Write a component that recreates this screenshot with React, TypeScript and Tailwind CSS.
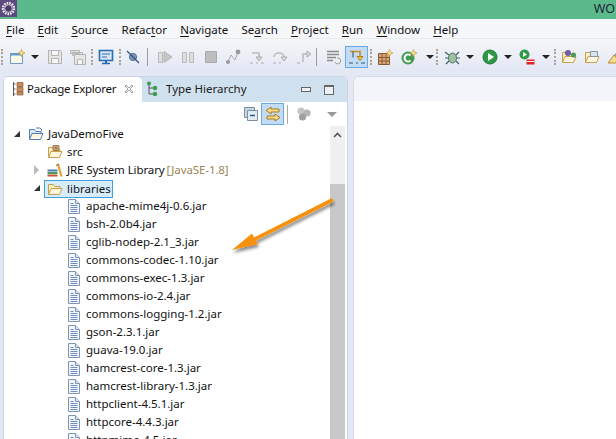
import type { ReactNode } from "react";

const jars = [
  "apache-mime4j-0.6.jar",
  "bsh-2.0b4.jar",
  "cglib-nodep-2.1_3.jar",
  "commons-codec-1.10.jar",
  "commons-exec-1.3.jar",
  "commons-io-2.4.jar",
  "commons-logging-1.2.jar",
  "gson-2.3.1.jar",
  "guava-19.0.jar",
  "hamcrest-core-1.3.jar",
  "hamcrest-library-1.3.jar",
  "httpclient-4.5.1.jar",
  "httpcore-4.4.3.jar",
  "httpmime-4.5.jar",
];

function U({ children }: { children: ReactNode }) {
  return <span className="underline underline-offset-2">{children}</span>;
}

function Ic({ w = 16, className = "", children }: { w?: number; className?: string; children: ReactNode }) {
  return (
    <svg width={w} height="16" viewBox={`0 0 ${w} 16`} className={`shrink-0 ${className}`}>
      {children}
    </svg>
  );
}

function Grip({ className = "" }: { className?: string }) {
  return <div className={`h-[16px] w-[2px] shrink-0 border-l-2 border-dotted border-[#a9a392] ${className}`} />;
}

function Drop({ className = "" }: { className?: string }) {
  return <div className={`h-0 w-0 shrink-0 border-x-[4px] border-t-[4px] border-x-transparent border-t-[#222] ${className}`} />;
}

function Sep({ className = "" }: { className?: string }) {
  return <div className={`h-[18px] w-px shrink-0 bg-[#9a9aa0] ${className}`} />;
}

function Star() {
  return <path d="M12.500 .5l1 2.500 2.500 1-2.500 1-1 2.500-1-2.500-2.500-1 2.500-1z" fill="#f7e3a0" stroke="#c79b35" strokeWidth=".7" />;
}

function Folder({ color = "#c9a14e", fill = "#fbeec4" }: { color?: string; fill?: string }) {
  return (
    <>
      <path d="M1.500 13.500v-10h5l1.500 2h5v2" fill={fill} stroke={color} />
      <path d="M1.500 13.500l2.500-6h11l-2.500 6z" fill="#fff6dc" stroke={color} />
    </>
  );
}

function JarIcon() {
  return (
    <Ic className="mr-[3px]">
      <path d="M1.500 1.500h7l4 4v10h-11z" fill="#f3f6fb" stroke="#8094b4" />
      <path d="M8.500 1.500v4h4" fill="#dfe6f2" stroke="#8094b4" />
      <path d="M3.500 5.500h3M3.500 7.500h7M3.500 9.500h7M3.500 11.500h7M3.500 13.500h7" stroke="#6f8fc0" />
    </Ic>
  );
}

function Row({ children, indent }: { children: ReactNode; indent: string }) {
  return <div className={`flex h-[18px] items-center whitespace-nowrap pb-[2px] ${indent}`}>{children}</div>;
}

function Expanded() {
  return <div className="h-0 w-0 shrink-0 border-b-[6px] border-l-[6px] border-b-[#333] border-l-transparent" />;
}

export default function App() {
  return (
    <div
      className="relative flex h-[439px] w-[616px] flex-col overflow-hidden bg-[#e4e8f5] text-[11.5px] text-[#111]"
      style={{ fontFamily: '"Noto Sans", "Open Sans", sans-serif' }}
    >
      {/* title bar */}
      <div className="flex h-[19px] shrink-0 items-center justify-between bg-[#5aba8b]">
        <div className="flex h-[17px] w-[17px] items-center justify-center self-start bg-[#5d4a7f]">
          <svg width="15" height="15" viewBox="0 0 15 15">
            <circle cx="7.500" cy="7.500" r="5.500" fill="none" stroke="#eee" strokeWidth="2.400" strokeDasharray="1.600 1" />
            <circle cx="7.500" cy="7.500" r="3.800" fill="#4b3a6b" stroke="#e4e4e4" strokeWidth=".8" />
          </svg>
        </div>
        <span className="whitespace-nowrap pr-[1px] text-[12.5px] text-[#223]">WO</span>
      </div>

      {/* menu */}
      <div className="flex h-[19px] shrink-0 items-center gap-[13.2px] bg-[#f6f7f9] pl-[6px] pt-[2px]">
        <span><U>F</U>ile</span>
        <span><U>E</U>dit</span>
        <span><U>S</U>ource</span>
        <span>Refac<U>t</U>or</span>
        <span><U>N</U>avigate</span>
        <span>Se<U>a</U>rch</span>
        <span><U>P</U>roject</span>
        <span><U>R</U>un</span>
        <span><U>W</U>indow</span>
        <span><U>H</U>elp</span>
      </div>

      {/* toolbar */}
      <div className="flex h-[32px] shrink-0 items-center overflow-hidden border-t border-[#e9eaee] bg-gradient-to-b from-[#f5f6f8] to-[#e4e8f5] pt-[4px]">
        <Grip className="ml-[1px]" />
        <Ic className="ml-[6px]">
          <path d="M1.500 4.500h12v10h-12z" fill="#fdf8e6" stroke="#6e9ac6" />
          <path d="M1.500 4.500h12v2h-12z" fill="#5f9bd4" />
          <Star />
        </Ic>
        <Drop className="ml-[6px]" />
        <Ic className="ml-[8px]">
          <path d="M1.500 1.500h12l1 1v12h-13z" fill="#e6e6e6" stroke="#b3b3b3" />
          <path d="M4.500 1.500h7v5h-7zM4.500 9.500h7v5h-7z" fill="#f6f6f6" stroke="#b3b3b3" />
        </Ic>
        <Ic className="ml-[7px]">
          <path d="M.5 1.500h9v3h-9zM2.500 3.500h10v3h-10z" fill="#e0e0e0" stroke="#b7b7b7" />
          <path d="M4.500 5.500h11v10h-11z" fill="#e6e6e6" stroke="#b3b3b3" />
          <path d="M7.500 10.500h5v5h-5z" fill="#f6f6f6" stroke="#b3b3b3" />
        </Ic>
        <Grip className="ml-[5px]" />
        <Ic className="ml-[5px]">
          <path d="M1.500 1.500h13v10h-13z" fill="#d7e6f5" stroke="#2a6cb0" strokeWidth="1.600" />
          <path d="M4 5h8M4 8h5" stroke="#2a6cb0" />
          <path d="M4 14.500h8" stroke="#2a6cb0" strokeWidth="1.500" />
          <path d="M8 12v2" stroke="#2a6cb0" strokeWidth="2" />
        </Ic>
        <Grip className="ml-[5px]" />
        <Ic className="ml-[4px]">
          <circle cx="8" cy="8" r="3.600" fill="#7e97bb" stroke="#56709b" />
          <path d="M2 2l12 12" stroke="#2f4f83" strokeWidth="1.200" />
        </Ic>
        <Sep className="ml-[6px]" />
        <Ic className="ml-[9px]">
          <path d="M1.500 3.500h4v10h-4z" fill="#ddd" stroke="#bbb" />
          <path d="M7 2.500l8 5.500-8 5.500z" fill="#c6c6c6" stroke="#b3b3b3" />
        </Ic>
        <Ic className="ml-[7px]">
          <path d="M2.500 3.500h4v10h-4zM9.500 3.500h4v10h-4z" fill="#ddd" stroke="#bbb" />
        </Ic>
        <Ic className="ml-[7px]">
          <path d="M2.500 2.500h11v11h-11z" fill="#bdbdbd" stroke="#aaa" />
        </Ic>
        <Ic className="ml-[6px]">
          <path d="M3 13l3-7 4 5 3-8" fill="none" stroke="#a8a8a8" />
          <circle cx="3" cy="13" r="2" fill="#999" />
          <circle cx="13" cy="3" r="2.400" fill="#999" />
        </Ic>
        <Ic className="ml-[8px]">
          <path d="M3 4h7v6" fill="none" stroke="#bbb" strokeWidth="1.600" />
          <path d="M7 8l3 4 3-4z" fill="#ddd" stroke="#aaa" />
          <path d="M1 14h3M7 14h2M12 14h3" stroke="#aaa" />
        </Ic>
        <Ic className="ml-[7px]">
          <path d="M2 8a5 4 0 0 1 10 0" fill="none" stroke="#bbb" strokeWidth="1.600" />
          <path d="M9 8l3 4 3-4z" fill="#ddd" stroke="#aaa" />
          <path d="M1 14h3M7 14h2" stroke="#aaa" />
        </Ic>
        <Ic className="ml-[8px]">
          <path d="M7 13V5h4" fill="none" stroke="#bbb" strokeWidth="1.600" />
          <path d="M11 2l4 3-4 3z" fill="#ddd" stroke="#aaa" />
          <path d="M1 14h3" stroke="#aaa" />
        </Ic>
        <Sep className="ml-[4px]" />
        <Ic className="ml-[9px]">
          <path d="M1 2.500h12M1 5.500h12M1 8.500h9M1 11.500h6" stroke="#8b8b8b" strokeWidth="1.400" />
          <path d="M9 13a3 3 0 1 0 2-4" fill="#eee" stroke="#999" />
        </Ic>
        <div className="ml-[3px] flex h-[22px] w-[23px] shrink-0 items-center justify-center border border-[#6aa9e6] bg-[#c3dcf5]">
          <Ic>
            <path d="M1 2.500h10v5" fill="none" stroke="#c98f1e" strokeWidth="1.700" />
            <path d="M8 7.500h6l-3 4z" fill="#f3c44f" stroke="#b57f15" />
            <path d="M4 2.500v6M0 14h4M7 14h2M12 14h4" stroke="#456" strokeWidth="1.100" />
          </Ic>
        </div>
        <Grip className="ml-[2px]" />
        <Ic className="ml-[5px]">
          <path d="M1.500 4.500h11v11h-11z" fill="#d9a77c" stroke="#8a5a33" />
          <path d="M5 4.500v11M9 4.500v11M1.500 8.500h11M1.500 12h11" stroke="#8a5a33" />
          <Star />
        </Ic>
        <Ic className="ml-[8px]">
          <circle cx="7" cy="9" r="6.500" fill="#3f9c4e" />
          <path d="M9.500 6.500a3.500 3.500 0 1 0 0 5" fill="none" stroke="#fff" strokeWidth="2" />
          <Star />
        </Ic>
        <Drop className="ml-[9px]" />
        <Grip className="ml-[2px]" />
        <Ic className="ml-[6px]">
          <ellipse cx="8.500" cy="9" rx="4" ry="5" fill="#9fc0a0" stroke="#4a7a5b" />
          <path d="M1 3l4 3M1 9h3M2 15l3-3M15 3l-3 3M16 9h-3M15 15l-3-3" stroke="#3a5a70" strokeWidth="1.100" />
        </Ic>
        <Drop className="ml-[6px]" />
        <Ic className="ml-[8px]">
          <circle cx="8" cy="8" r="7" fill="#2f9a45" stroke="#1d7a33" />
          <path d="M6 4l6 4-6 4z" fill="#fff" />
        </Ic>
        <Drop className="ml-[6px]" />
        <Ic className="ml-[7px]">
          <circle cx="5.500" cy="5.500" r="5" fill="#2f9a45" />
          <path d="M4 3l4 2.500-4 2.500z" fill="#fff" />
          <path d="M7.500 10.500h8v5h-8z" fill="#e0242a" />
          <path d="M7.500 12.500h8" stroke="#fff" />
        </Ic>
        <Drop className="ml-[7px]" />
        <Grip className="ml-[4px]" />
        <Ic className="ml-[5px]">
          <Folder />
          <circle cx="7" cy="4" r="3" fill="#6b5ba8" />
          <circle cx="12.500" cy="6" r="2.600" fill="#4f9a58" />
        </Ic>
        <Ic className="ml-[7px]">
          <Folder />
          <path d="M6.500 2.500h7v5h-7z" fill="#dbe3ee" stroke="#8494ad" />
        </Ic>
        <Ic className="ml-[7px]">
          <path d="M1 14l6-8 7 8z" fill="#f5d98c" stroke="#b98d33" />
          <path d="M7 6l4-4 4 4-3 3z" fill="#999" />
        </Ic>
      </div>

      {/* workbench */}
      <div className="flex min-h-0 flex-1 gap-[5px] pl-[3px] pt-[6px]">
        {/* Package Explorer view */}
        <div className="flex h-[400px] w-[345px] shrink-0 flex-col overflow-hidden rounded-t-[5px] border border-b-0 border-[#cdd3e0] bg-white">
          <div className="flex h-[25px] shrink-0 items-stretch bg-[#cfe0ee]">
            <div className="flex w-[138px] shrink-0 items-center rounded-tr-[5px] bg-white pb-[2px] pl-[7px]">
              <Ic w={14} className="mr-[2px]">
                <path d="M2.500 1v14" stroke="#555" />
                <path d="M2.500 3h2M2.500 8h2M2.500 13h2" stroke="#555" />
                <path d="M6 1.500h6v4h-6zM6 6.500h6v4h-6zM6 11h6v3h-6z" fill="#c98c5a" stroke="#8a5a33" strokeWidth=".7" />
              </Ic>
              <span className="whitespace-nowrap tracking-[-.25px]">Package Explorer</span>
              <svg width="10" height="10" viewBox="0 0 10 10" className="ml-[8px] shrink-0">
                <path d="M1 2l1-1 3 3 3-3 1 1-3 3 3 3-1 1-3-3-3 3-1-1 3-3z" fill="#fff" stroke="#888" strokeWidth=".8" />
              </svg>
            </div>
            <div className="flex items-center pb-[2px] pl-[4px]">
              <Ic w={12} className="mr-[8px]">
                <path d="M3 2v11h5M3 7h5" fill="none" stroke="#555" />
                <circle cx="3" cy="2.500" r="2" fill="#3f9c4e" />
                <circle cx="9" cy="7" r="2.200" fill="#3f9c4e" />
                <circle cx="9" cy="13" r="2.200" fill="#3f9c4e" />
              </Ic>
              <span className="whitespace-nowrap text-[#222]">Type Hierarchy</span>
            </div>
            <div className="ml-auto flex items-center gap-[13px] pr-[13px]">
              <div className="h-[5px] w-[10px] border border-[#666] bg-[#eef2f7]" />
              <div className="h-[10px] w-[10px] border border-t-2 border-[#666] bg-[#eef2f7]" />
            </div>
          </div>

          <div className="flex h-[24px] shrink-0 items-center justify-end pr-[10px]">
            <Ic>
              <path d="M1.500 1.500h10v10h-10z" fill="#c8d6e4" stroke="#7b8ea3" />
              <path d="M4.500 4.500h10v10h-10z" fill="#e3ecf4" stroke="#7b8ea3" />
              <path d="M7 9.500h5" stroke="#33597f" strokeWidth="1.400" />
            </Ic>
            <div className="ml-[2px] flex h-[22px] w-[23px] items-center justify-center border border-[#6aa9e6] bg-[#c3dcf5]">
              <Ic>
                <path d="M6 1L1 4.500 6 8V6h8V3H6z" fill="#f8dc8c" stroke="#a97a18" />
                <path d="M10 8l5 3.500-5 3.500v-2H2v-3h8z" fill="#f8dc8c" stroke="#a97a18" />
              </Ic>
            </div>
            <div className="ml-[3px] mr-[8px] h-[19px] w-px bg-[#aaa]" />
            <Ic>
              <circle cx="5" cy="5" r="3.600" fill="#c5c5c5" />
              <circle cx="11" cy="7" r="3.600" fill="#b5b5b5" />
              <circle cx="6.500" cy="11" r="3.600" fill="#a0a0a0" />
            </Ic>
            <div className="ml-[15px] h-0 w-0 border-x-[5px] border-t-[5px] border-x-transparent border-t-[#999]" />
          </div>

          <div className="flex min-h-0 flex-1">
            <div className="min-w-0 flex-1 overflow-hidden">
              <Row indent="pl-[10px]">
                <Expanded />
                <Ic w={17} className="ml-[8px] mr-[3px]">
                  <Folder color="#4f7fb8" fill="#d9e8f7" />
                  <path d="M8 2h4l2 2-2 2" fill="none" stroke="#4f7fb8" />
                </Ic>
                <span>JavaDemoFive</span>
              </Row>
              <Row indent="pl-[43px]">
                <Ic className="mr-[4px]">
                  <Folder />
                  <path d="M6 1.500h6v5h-6zM9 1.500v5M6 4h6" fill="#d9b98a" stroke="#8a5a33" strokeWidth=".7" />
                </Ic>
                <span>src</span>
              </Row>
              <Row indent="pl-[30px]">
                <div className="h-0 w-0 shrink-0 border-y-[5px] border-l-[5px] border-y-transparent border-l-[#bbb]" />
                <Ic className="ml-[8px] mr-[4px]">
                  <path d="M.5 7.500h10v2h-10z" fill="#4c7fb4" />
                  <path d="M.5 10h10v2h-10z" fill="#4f9a58" />
                  <path d="M.5 12.500h10v2h-10z" fill="#c2553a" />
                  <path d="M11 2l3.500 12.500" stroke="#e0a52e" strokeWidth="2.200" />
                  <path d="M9 3.500l3-1.500" stroke="#8a5a33" />
                </Ic>
                <span className="tracking-[-.1px]">JRE System Library</span>
                <span className="ml-[2px] tracking-[-.1px] text-[#9c8455]">[JavaSE-1.8]</span>
              </Row>
              <Row indent="pl-[30px]">
                <Expanded />
                <div className="ml-[4px] flex h-[18px] shrink-0 items-center self-start border border-[#3fa0dc] bg-[#d6ecfb] pb-[1px] pl-[2px] pr-[1px]">
                  <Ic className="mr-[4px]">
                    <Folder />
                  </Ic>
                  <span>libraries</span>
                </div>
              </Row>
              {jars.map((jar) => (
                <Row key={jar} indent="pl-[63px]">
                  <JarIcon />
                  <span>{jar}</span>
                </Row>
              ))}
            </div>
            {/* scrollbar */}
            <div className="mr-[2px] flex w-[15px] shrink-0 flex-col bg-[#f0f0f0]">
              <div className="flex h-[58px] shrink-0 justify-center pt-[6px]">
                <svg width="9" height="6" viewBox="0 0 9 6">
                  <path d="M1 5l3.500-3.500L8 5" fill="none" stroke="#555" strokeWidth="1.600" />
                </svg>
              </div>
              <div className="flex-1 bg-[#c8c8c8]" />
            </div>
          </div>
        </div>

        {/* editor area */}
        <div className="h-[400px] min-w-0 flex-1 overflow-hidden rounded-tl-[6px] border border-b-0 border-r-0 border-[#d5dae6] bg-white">
          <div className="h-[24px] bg-[#f3f5fb]" />
        </div>
      </div>

      {/* annotation arrow */}
      <svg width="120" height="70" viewBox="0 0 120 70" className="absolute left-[225px] top-[192px]">
        <defs>
          <filter id="sh" x="-20%" y="-20%" width="140%" height="160%">
            <feDropShadow dx="1" dy="3" stdDeviation="1.800" floodColor="#000" floodOpacity=".45" />
          </filter>
        </defs>
        <path d="M107 6L108.500 9.500L31 48.500L33 52L7 58L27 41.500L29 45.500Z" fill="#f7900a" filter="url(#sh)" />
      </svg>
    </div>
  );
}
